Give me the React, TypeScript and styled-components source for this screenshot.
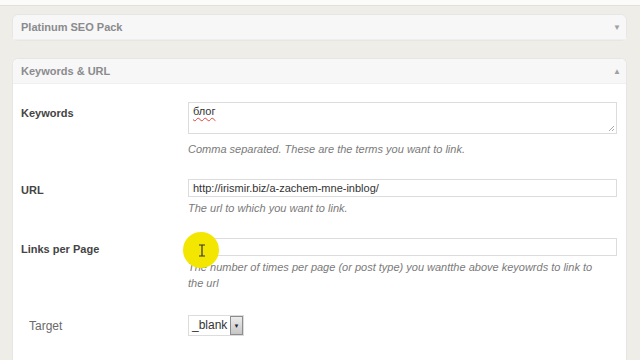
import React from 'react'
import styled, { createGlobalStyle } from 'styled-components'

const GlobalStyle = createGlobalStyle`
  html, body {
    margin: 0;
    padding: 0;
    background: #eeede8;
    font-family: 'Liberation Sans', Arial, sans-serif;
    overflow: hidden;
  }
`

const Page = styled.div`
  width: 640px;
  height: 360px;
  position: relative;
  overflow: hidden;
  background: #eeede8;
`

const TopStrip = styled.div`
  height: 5px;
  background: #fbfbfa;
  border-bottom: 1px solid #e2e1dc;
`

const Content = styled.div`
  padding: 8px 13px 0 12px;
  display: flex;
  flex-direction: column;
  gap: 17px;
`

const Panel = styled.div<{ $open?: boolean }>`
  background: ${(p) => (p.$open ? '#ffffff' : '#f7f7f7')};
  border: 1px solid #e6e6e4;
  border-radius: 6px;
  ${(p) => p.$open && 'border-bottom: none; border-bottom-left-radius: 0; border-bottom-right-radius: 0;'}
`

const PanelHeader = styled.div`
  height: 24px;
  display: flex;
  align-items: center;
  justify-content: space-between;
  padding: 0 5px 0 8px;
  background: #f7f7f7;
  border-radius: 6px 6px 0 0;
  border-bottom: 1px solid #efefef;
`

const PanelTitle = styled.span`
  font-size: 11px;
  font-weight: bold;
  color: #8a8b8d;
`

const Arrow = styled.span`
  font-size: 8px;
  color: #a0a0a0;
  margin-top: 1px;
`

const PanelBody = styled.div`
  padding: 18px 9px 30px 8px;
  display: flex;
  flex-direction: column;
  gap: 22px;
`

const Row = styled.div<{ $gap?: number }>`
  display: grid;
  grid-template-columns: 167px 1fr;
  margin-top: ${(p) => p.$gap ?? 0}px;
`

const Label = styled.div<{ $plain?: boolean }>`
  font-size: ${(p) => (p.$plain ? '12px' : '11px')};
  font-weight: ${(p) => (p.$plain ? 'normal' : 'bold')};
  color: ${(p) => (p.$plain ? '#6a6a6a' : '#444444')};
  padding-top: 4px;
  padding-left: ${(p) => (p.$plain ? 8 : 0)}px;
  line-height: 14px;
`

const Field = styled.div`
  display: flex;
  flex-direction: column;
`

const TextArea = styled.div`
  position: relative;
  border: 1px solid #dcdcdc;
  background: #fff;
  font-size: 11px;
  color: #333;
  padding: 2px 4px;
  line-height: 13px;
  box-sizing: border-box;
  height: 32px;
`

const Misspelled = styled.span`
  text-decoration: underline wavy #d44;
  text-decoration-thickness: 1px;
  text-underline-offset: 2px;
`

const Grip = styled.svg`
  position: absolute;
  right: 1px;
  bottom: 1px;
`

const TextInput = styled.div`
  height: 18px;
  border: 1px solid #dcdcdc;
  background: #fff;
  box-sizing: border-box;
  font-size: 11px;
  color: #333;
  padding: 0 4px;
  line-height: 16px;
`

const Help = styled.p<{ $top?: number }>`
  margin: ${(p) => p.$top ?? 3}px 0 0;
  font-size: 11px;
  font-style: italic;
  color: #7a7a7a;
  line-height: 16px;
  padding-right: 10px;
`

const Select = styled.div`
  display: flex;
  width: 56px;
  height: 21px;
  border: 1px solid #dcdcdc;
  box-sizing: border-box;
  background: #fff;
`

const SelectValue = styled.span`
  flex: 1;
  font-size: 12px;
  color: #333;
  line-height: 19px;
  padding-left: 3px;
`

const SelectButton = styled.span`
  width: 11px;
  background: linear-gradient(#ececec, #c6c6c6);
  border: 1px solid #8d8d8d;
  display: flex;
  align-items: center;
  justify-content: center;
  font-size: 6px;
  color: #222;
`

const Highlight = styled.div`
  position: absolute;
  left: 183px;
  top: 232px;
  width: 36px;
  height: 36px;
  border-radius: 50%;
  background: radial-gradient(circle, #f3e600 70%, rgba(243, 230, 0, 0.8) 88%, rgba(243, 230, 0, 0) 100%);
  display: flex;
  align-items: center;
  justify-content: center;
`

const Cursor = styled.svg`
  margin-left: 1px;
`

export default function App() {
  return (
    <Page>
      <GlobalStyle />
      <TopStrip />
      <Content>
        <Panel>
          <PanelHeader>
            <PanelTitle>Platinum SEO Pack</PanelTitle>
            <Arrow>▼</Arrow>
          </PanelHeader>
        </Panel>
        <Panel $open>
          <PanelHeader>
            <PanelTitle>Keywords &amp; URL</PanelTitle>
            <Arrow>▲</Arrow>
          </PanelHeader>
          <PanelBody>
            <Row>
              <Label>Keywords</Label>
              <Field>
                <TextArea>
                  <Misspelled>блог</Misspelled>
                  <Grip width="7" height="7" viewBox="0 0 7 7">
                    <path d="M6 1 L1 6 M6 4 L4 6" stroke="#aaa" strokeWidth="1" />
                  </Grip>
                </TextArea>
                <Help $top={7}>Comma separated. These are the terms you want to link.</Help>
              </Field>
            </Row>
            <Row>
              <Label>URL</Label>
              <Field>
                <TextInput>http://irismir.biz/a-zachem-mne-inblog/</TextInput>
                <Help>The url to which you want to link.</Help>
              </Field>
            </Row>
            <Row>
              <Label>Links per Page</Label>
              <Field>
                <TextInput />
                <Help>
                  The number of times per page (or post type) you wantthe above keyowrds to link to the url
                </Help>
              </Field>
            </Row>
            <Row $gap={2}>
              <Label $plain>Target</Label>
              <Field>
                <Select>
                  <SelectValue>_blank</SelectValue>
                  <SelectButton>▼</SelectButton>
                </Select>
              </Field>
            </Row>
          </PanelBody>
        </Panel>
      </Content>
      <Highlight>
        <Cursor width="8" height="13" viewBox="0 0 8 13">
          <path d="M1 1 H7 M4 1 V12 M1 12 H7" stroke="#333" strokeWidth="1.2" fill="none" />
        </Cursor>
      </Highlight>
    </Page>
  )
}
